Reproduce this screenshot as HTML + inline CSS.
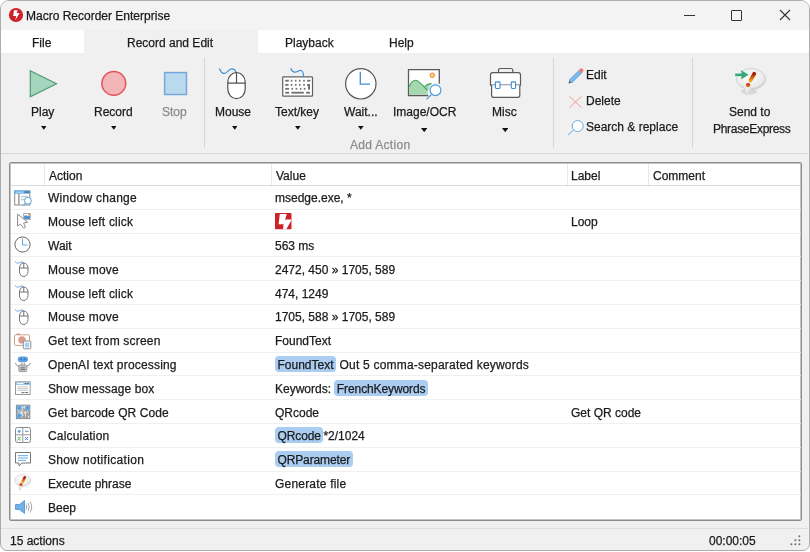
<!DOCTYPE html><html><head><meta charset="utf-8"><style>
html,body{margin:0;padding:0;width:810px;height:552px;overflow:hidden;background:#fff}
.r{position:absolute}
.t{position:absolute;font-family:'Liberation Sans', sans-serif;line-height:20px;white-space:pre;will-change:transform;-webkit-text-stroke:0.25px currentColor}
.p{background:#abcdf1;border-radius:4px;padding:2.3px 2.5px 0.2px 2.5px}
</style></head><body><div class="r" style="left:0;top:0;width:810px;height:552px;background:#ffffff"></div><div class="r" style="left:0;top:0;width:808px;height:549px;background:#f0f0f0;border:1px solid #adadad;border-radius:9px 9px 7px 7px;overflow:hidden"><div class="r" style="left:0;top:0;width:808px;height:29px;background:#f3f3f3"></div><div class="r" style="left:0;top:29px;width:808px;height:23px;background:#ffffff"></div><div class="r" style="left:83px;top:29px;width:174px;height:23px;background:#f0f0f0"></div></div><svg style="position:absolute;left:8px;top:7px;" width="16" height="16" viewBox="0 0 16 16"><circle cx="8" cy="8" r="7.1" fill="#cc2229"/><path d="M6 3.2 L9.8 3.2 L8.5 6 L11.6 6 L7.3 13.2 L8.2 8.9 L5.2 8.9 Z" fill="#fff"/></svg><div class="t" style="left:26px;top:6px;font-size:12px;color:#1b1b1b;">Macro Recorder Enterprise</div><div class="r" style="left:684px;top:14.5px;width:11px;height:1px;background:#333;"></div><div class="r" style="left:731px;top:10px;width:9px;height:9px;border:1px solid #333;border-radius:1px"></div><svg style="position:absolute;left:779px;top:9px;" width="12" height="12" viewBox="0 0 12 12"><path d="M1 1 L11 11 M11 1 L1 11" stroke="#333" stroke-width="1.1"/></svg><div class="t" style="left:32px;top:33px;font-size:12px;color:#1b1b1b;">File</div><div class="t" style="left:127px;top:33px;font-size:12px;color:#1b1b1b;">Record and Edit</div><div class="t" style="left:285px;top:33px;font-size:12px;color:#1b1b1b;">Playback</div><div class="t" style="left:389px;top:33px;font-size:12px;color:#1b1b1b;">Help</div><div class="r" style="left:1px;top:153px;width:807px;height:1px;background:#d9d9d9;"></div><div class="r" style="left:204px;top:58px;width:1px;height:90px;background:#d6d6d6;"></div><div class="r" style="left:553px;top:58px;width:1px;height:90px;background:#d6d6d6;"></div><div class="r" style="left:692px;top:58px;width:1px;height:90px;background:#d6d6d6;"></div><svg style="position:absolute;left:28px;top:68px;" width="32" height="32" viewBox="0 0 32 32"><path d="M2.3 2.7 L28.5 15.7 L2.3 28.7 Z" fill="#a6d5bd" stroke="#4f9a73" stroke-width="1.2" stroke-linejoin="miter"/></svg><svg style="position:absolute;left:99px;top:69px;" width="30" height="30" viewBox="0 0 30 30"><circle cx="14.8" cy="14.4" r="11.9" fill="#f2b6b9" stroke="#e6505a" stroke-width="1.5"/></svg><svg style="position:absolute;left:162px;top:70px;" width="28" height="28" viewBox="0 0 28 28"><rect x="2.6" y="2.6" width="21.9" height="21.9" fill="#b9d9ef" stroke="#76a9d9" stroke-width="1.5"/></svg><svg style="position:absolute;left:216px;top:64px;" width="34" height="38" viewBox="0 0 34 38"><path d="M3.4 4.5 C5 8.5 7 10 9 9.3 C11.5 8.5 13 5 15.5 4.9 C17.5 4.8 19.5 6 20.1 8.5" fill="none" stroke="#3b8ed8" stroke-width="1.2"/><rect x="11.8" y="8.5" width="17.4" height="26.1" rx="8.7" ry="9.5" fill="#fff" stroke="#505050" stroke-width="1.2"/><path d="M20.5 8.5 V19.2 M11.8 19.2 H29.2" stroke="#505050" stroke-width="1.2"/></svg><svg style="position:absolute;left:280px;top:64px;" width="36" height="36" viewBox="0 0 36 36"><rect x="2.7" y="12.9" width="29.8" height="19.3" rx="0.8" fill="#fff" stroke="#606060" stroke-width="1.2"/><path d="M10.7 4.2 C12 7.5 14 8.5 16 8 C18 7.5 19 6 21 6.5 C23 7 23.5 9 23.5 12.4" fill="none" stroke="#3b8ed8" stroke-width="1.2"/><rect x="5.2" y="15.8" width="3.6" height="1.8" fill="#707070"/><rect x="10.7" y="15.8" width="1.7" height="1.8" fill="#707070"/><rect x="14.9" y="15.8" width="1.6" height="1.8" fill="#707070"/><rect x="18.9" y="15.8" width="1.6" height="1.8" fill="#707070"/><rect x="23.2" y="15.8" width="1.6" height="1.8" fill="#707070"/><rect x="27.1" y="15.8" width="3.3" height="1.8" fill="#707070"/><rect x="5.2" y="20" width="3.3" height="1.8" fill="#707070"/><rect x="10.7" y="20" width="1.7" height="1.8" fill="#707070"/><rect x="14.9" y="20" width="1.6" height="1.8" fill="#707070"/><rect x="18.9" y="20" width="1.6" height="1.8" fill="#707070"/><rect x="23.2" y="20" width="1.6" height="1.8" fill="#707070"/><rect x="27.1" y="20" width="2.9" height="1.8" fill="#707070"/><rect x="5.2" y="23.9" width="3.9" height="1.8" fill="#707070"/><rect x="11.4" y="23.9" width="1.6" height="1.8" fill="#707070"/><rect x="15.6" y="23.9" width="1.6" height="1.8" fill="#707070"/><rect x="19.9" y="23.9" width="1.6" height="1.8" fill="#707070"/><rect x="23.8" y="23.9" width="1.6" height="1.8" fill="#707070"/><rect x="5.2" y="27.8" width="3.9" height="1.8" fill="#707070"/><rect x="11.4" y="27.8" width="12.4" height="1.8" fill="#707070"/><rect x="26.1" y="27.8" width="3.9" height="1.8" fill="#707070"/><rect x="28.1" y="20" width="1.9" height="5.7" fill="#707070"/></svg><svg style="position:absolute;left:344px;top:67px;" width="34" height="34" viewBox="0 0 34 34"><circle cx="16.8" cy="16.8" r="15.2" fill="#fff" stroke="#555" stroke-width="1.2"/><path d="M16.3 4.8 V17.2 H26" fill="none" stroke="#3b8ed8" stroke-width="1.3"/></svg><svg style="position:absolute;left:406px;top:67px;" width="36" height="36" viewBox="0 0 36 36"><rect x="2.5" y="2.6" width="30.8" height="25.9" fill="#fff"/><path d="M22.3 28.5 H2.5 V2.6 H33.3 V16.7" fill="none" stroke="#5a5a5a" stroke-width="1.3"/><path d="M3.2 19.4 C5 15.5 7.5 13.3 9.7 13.3 C12.5 13.3 16 17.5 21.5 23.5 L22 27.8 H3.2 Z" fill="#a6d8b0"/><path d="M18.8 19.4 C21 17.5 23.5 16.5 25.7 16.7 L25 24 L21.5 23.5 Z" fill="#a6d8b0"/><path d="M3.2 19.4 C5 15.5 7.5 13.3 9.7 13.3 C12.5 13.3 16 17.5 21.5 23.5 M18.8 19.4 C21 17.5 23.5 16.5 25.7 16.7" fill="none" stroke="#3aa05a" stroke-width="1.1"/><circle cx="26.3" cy="8.3" r="2.3" fill="#f8d078" stroke="#f08a3a" stroke-width="1"/><circle cx="29.5" cy="23.2" r="7.2" fill="#f0f0f0"/><circle cx="29.5" cy="23.2" r="5.4" fill="#fff" stroke="#4a9ee0" stroke-width="1.2"/><path d="M25.3 27.7 L20.4 32.4" stroke="#4a9ee0" stroke-width="1.3"/></svg><svg style="position:absolute;left:488px;top:66px;" width="34" height="34" viewBox="0 0 34 34"><path d="M10.5 6.7 V4.5 Q10.5 2.5 12.5 2.5 H22.8 Q24.8 2.5 24.8 4.5 V6.7" fill="none" stroke="#5a5a5a" stroke-width="1.2"/><path d="M2.5 19.2 V9 Q2.5 6.7 4.8 6.7 H30.2 Q32.5 6.7 32.5 9 V19.2 Z" fill="#fff" stroke="#5a5a5a" stroke-width="1.2"/><path d="M3.6 19.2 V29.2 Q3.6 31.4 5.8 31.4 H29.6 Q31.8 31.4 31.8 29.2 V19.2" fill="#fff" stroke="#5a5a5a" stroke-width="1.2"/><rect x="7.4" y="15.9" width="4.6" height="6.6" rx="0.9" fill="#fff" stroke="#3b8ed8" stroke-width="1.1"/><rect x="23.3" y="15.9" width="4.3" height="6.6" rx="0.9" fill="#fff" stroke="#3b8ed8" stroke-width="1.1"/></svg><div class="t" style="left:31px;top:102px;font-size:12px;color:#1b1b1b;">Play</div><div class="t" style="left:94px;top:102px;font-size:12px;color:#1b1b1b;">Record</div><div class="t" style="left:162px;top:102px;font-size:12px;color:#8c8c8c;">Stop</div><div class="t" style="left:215px;top:102px;font-size:12px;color:#1b1b1b;">Mouse</div><div class="t" style="left:275px;top:102px;font-size:12px;color:#1b1b1b;">Text/key</div><div class="t" style="left:344px;top:102px;font-size:12px;color:#1b1b1b;">Wait...</div><div class="t" style="left:393px;top:102px;font-size:12px;color:#1b1b1b;">Image/OCR</div><div class="t" style="left:492px;top:102px;font-size:12px;color:#1b1b1b;">Misc</div><svg style="position:absolute;left:40.5px;top:126px;" width="5.6" height="3.8" viewBox="0 0 5.6 3.8"><path d="M0 0 H5.6 L2.8 3.8 Z" fill="#111"/></svg><svg style="position:absolute;left:110.8px;top:126px;" width="5.6" height="3.8" viewBox="0 0 5.6 3.8"><path d="M0 0 H5.6 L2.8 3.8 Z" fill="#111"/></svg><svg style="position:absolute;left:231.6px;top:126px;" width="5.6" height="3.8" viewBox="0 0 5.6 3.8"><path d="M0 0 H5.6 L2.8 3.8 Z" fill="#111"/></svg><svg style="position:absolute;left:295.0px;top:126px;" width="5.6" height="3.8" viewBox="0 0 5.6 3.8"><path d="M0 0 H5.6 L2.8 3.8 Z" fill="#111"/></svg><svg style="position:absolute;left:358.0px;top:126px;" width="5.6" height="3.8" viewBox="0 0 5.6 3.8"><path d="M0 0 H5.6 L2.8 3.8 Z" fill="#111"/></svg><svg style="position:absolute;left:421.0px;top:127.6px;" width="6.4" height="4.2" viewBox="0 0 6.4 4.2"><path d="M0 0 H6.4 L3.2 4.2 Z" fill="#111"/></svg><svg style="position:absolute;left:501.8px;top:127.8px;" width="6.4" height="4.2" viewBox="0 0 6.4 4.2"><path d="M0 0 H6.4 L3.2 4.2 Z" fill="#111"/></svg><div class="t" style="left:350px;top:135px;font-size:12px;color:#8c8c8c;letter-spacing:0.3px">Add Action</div><svg style="position:absolute;left:564px;top:64px;" width="24" height="24" viewBox="0 0 24 24"><g transform="translate(11.6 12.4) rotate(-45)"><path d="M-10 0 L-7 -1.9 L-7 1.9 Z" fill="#555"/><path d="M-7.6 -1.5 L-7 -1.9 V1.9 L-7.6 1.5 Z" fill="#ddd"/><rect x="-7" y="-1.9" width="13.5" height="3.8" fill="#7cb9ee" stroke="#4a8fd6" stroke-width="0.6"/><path d="M6.5 -2.1 H8.2 A2.1 2.1 0 0 1 8.2 2.1 H6.5 Z" fill="#f07a7a"/></g></svg><svg style="position:absolute;left:568px;top:95px;" width="15" height="14" viewBox="0 0 15 14"><path d="M1.5 1.5 L13.5 12.5 M13.5 1.5 L1.5 12.5" stroke="#f09a9a" stroke-width="1"/></svg><svg style="position:absolute;left:566px;top:118px;" width="20" height="20" viewBox="0 0 20 20"><circle cx="11.7" cy="8" r="5.5" fill="#fff" stroke="#6aaee6" stroke-width="1"/><path d="M7.6 12 L2 17" stroke="#6aaee6" stroke-width="1"/></svg><div class="t" style="left:586px;top:65px;font-size:12px;color:#1b1b1b;">Edit</div><div class="t" style="left:586px;top:91px;font-size:12px;color:#1b1b1b;">Delete</div><div class="t" style="left:586px;top:117px;font-size:12px;color:#1b1b1b;">Search &amp; replace</div><svg style="position:absolute;left:734px;top:66px;" width="34" height="34" viewBox="0 0 34 34"><defs><radialGradient id="bub" cx="0.45" cy="0.4" r="0.65"><stop offset="0" stop-color="#ffffff"/><stop offset="0.75" stop-color="#eaeaea"/><stop offset="1" stop-color="#c4c4c4"/></radialGradient><linearGradient id="exc" x1="0" y1="0" x2="0" y2="1"><stop offset="0" stop-color="#a81808"/><stop offset="1" stop-color="#f0a010"/></linearGradient><linearGradient id="dot" x1="0" y1="0" x2="0" y2="1"><stop offset="0" stop-color="#b02008"/><stop offset="1" stop-color="#f09020"/></linearGradient></defs><ellipse cx="15" cy="25.5" rx="8" ry="3" fill="#d6d6d6" opacity="0.9"/><path d="M10 20 L12.3 29 L19 21.5 Z" fill="#e4e4e4" stroke="#cfcfcf" stroke-width="0.5"/><ellipse cx="17" cy="13" rx="14.6" ry="10.5" fill="url(#bub)" stroke="#c6c6c6" stroke-width="0.7"/><path d="M10 20.5 L12.3 27 L17 22 Z" fill="#ececec"/><path d="M20.3 7.8 L16.5 14.4" stroke="url(#exc)" stroke-width="3.8" stroke-linecap="round"/><circle cx="14.1" cy="19.1" r="2.2" fill="url(#dot)"/><path d="M0.7 7.1 H7.2 L6 2.9 L15.3 8.8 L6 14.6 L7.2 10.7 H0.7 Z" fill="#3aa87a" stroke="#fff" stroke-width="0.8" stroke-linejoin="round"/></svg><div class="t" style="left:729px;top:102px;font-size:12px;color:#1b1b1b;">Send to</div><div class="t" style="left:713px;top:119px;font-size:12px;color:#1b1b1b;letter-spacing:-0.3px">PhraseExpress</div><div class="r" style="left:9px;top:162px;width:793px;height:359px;background:#fff;border:1px solid #8e8e8e;box-shadow:inset 0 0 0 1px #c4c4c4;border-radius:2px;box-sizing:border-box"></div><div class="r" style="left:11px;top:185px;width:790px;height:1px;background:#d9d9d9;"></div><div class="r" style="left:44px;top:164px;width:1px;height:21px;background:#e8e8e8;"></div><div class="r" style="left:271px;top:164px;width:1px;height:21px;background:#e8e8e8;"></div><div class="r" style="left:567px;top:164px;width:1px;height:21px;background:#e8e8e8;"></div><div class="r" style="left:648px;top:164px;width:1px;height:21px;background:#e8e8e8;"></div><div class="t" style="left:48.7px;top:166px;font-size:12px;color:#1b1b1b;">Action</div><div class="t" style="left:276px;top:166px;font-size:12px;color:#1b1b1b;">Value</div><div class="t" style="left:571.3px;top:166px;font-size:12px;color:#1b1b1b;">Label</div><div class="t" style="left:653px;top:166px;font-size:12px;color:#1b1b1b;">Comment</div><div class="r" style="left:11px;top:208.8px;width:790px;height:1px;background:#f0f0f0;"></div><div class="r" style="left:11px;top:232.6px;width:790px;height:1px;background:#f0f0f0;"></div><div class="r" style="left:11px;top:256.4px;width:790px;height:1px;background:#f0f0f0;"></div><div class="r" style="left:11px;top:280.2px;width:790px;height:1px;background:#f0f0f0;"></div><div class="r" style="left:11px;top:304.0px;width:790px;height:1px;background:#f0f0f0;"></div><div class="r" style="left:11px;top:327.8px;width:790px;height:1px;background:#f0f0f0;"></div><div class="r" style="left:11px;top:351.6px;width:790px;height:1px;background:#f0f0f0;"></div><div class="r" style="left:11px;top:375.4px;width:790px;height:1px;background:#f0f0f0;"></div><div class="r" style="left:11px;top:399.2px;width:790px;height:1px;background:#f0f0f0;"></div><div class="r" style="left:11px;top:423.0px;width:790px;height:1px;background:#f0f0f0;"></div><div class="r" style="left:11px;top:446.8px;width:790px;height:1px;background:#f0f0f0;"></div><div class="r" style="left:11px;top:470.6px;width:790px;height:1px;background:#f0f0f0;"></div><div class="r" style="left:11px;top:494.4px;width:790px;height:1px;background:#f0f0f0;"></div><svg style="position:absolute;left:14px;top:189.5px;" width="18" height="17" viewBox="0 0 18 17"><rect x="0.7" y="1" width="15.1" height="14" fill="#fff" stroke="#8a8a8a" stroke-width="1"/><rect x="0.2" y="0.5" width="16.1" height="3.2" fill="#5aa6e6"/><rect x="1.5" y="1.6" width="8" height="1" fill="#cfe6fa"/><rect x="10.5" y="1.5" width="1.2" height="1.2" fill="#555"/><rect x="12.3" y="1.5" width="1.2" height="1.2" fill="#555"/><rect x="14.1" y="1.5" width="1.2" height="1.2" fill="#555"/><path d="M4.9 3.7 V14.6" stroke="#777" stroke-width="1.1"/><rect x="6.8" y="5.8" width="7.2" height="1.5" fill="#c8c8c8"/><rect x="6.8" y="8.8" width="7.2" height="1.5" fill="#c8c8c8"/><circle cx="13.9" cy="10.8" r="3.3" fill="#fff" stroke="#6ab0e8" stroke-width="1.1"/><path d="M11.6 13.2 L9.3 15.8" stroke="#6ab0e8" stroke-width="1.2"/></svg><div class="t" style="left:48px;top:188px;font-size:12px;color:#1b1b1b;letter-spacing:0.28px">Window change</div><div class="t" style="left:275px;top:188px;font-size:12px;color:#1b1b1b;">msedge.exe, *</div><svg style="position:absolute;left:14px;top:212px;" width="18" height="17" viewBox="0 0 18 17"><path d="M3.6 2 L3.6 13.9 L6.6 12.3 L9.8 16.3 L11.5 15.1 L9.6 11.1 L13.7 10.2 Z" fill="#fff" stroke="#8a8a8a" stroke-width="1" stroke-linejoin="round"/><rect x="9.7" y="1.5" width="6.6" height="5.8" fill="#fff" stroke="#999" stroke-width="0.8"/><path d="M10.1 4 L12 3 L13.5 4.2 L15 3.4 L15.9 4 V6.9 H10.1 Z" fill="#4a90d9"/><rect x="14.2" y="1.9" width="1.7" height="1.7" fill="#f09040"/></svg><div class="t" style="left:48px;top:212px;font-size:12px;color:#1b1b1b;letter-spacing:0.2px">Mouse left click</div><svg style="position:absolute;left:275px;top:213px;" width="17" height="17" viewBox="0 0 17 17"><rect x="0" y="0" width="16.5" height="16.2" rx="0.8" fill="#cc2229"/><path d="M4.8 1 L11.8 1 L10.1 6.6 L16.5 6.6 L16.5 7 L11.3 16.2 L8 16.2 L8.6 11.3 L3.6 11.3 Z" fill="#fff"/></svg><div class="t" style="left:571px;top:212px;font-size:12px;color:#1b1b1b;">Loop</div><svg style="position:absolute;left:14px;top:236px;" width="17" height="17" viewBox="0 0 17 17"><circle cx="8.5" cy="8.5" r="7.6" fill="#fff" stroke="#666" stroke-width="1"/><path d="M8.5 2.5 V9 H13.5" fill="none" stroke="#5aa6e6" stroke-width="1"/></svg><div class="t" style="left:48px;top:236px;font-size:12px;color:#1b1b1b;">Wait</div><div class="t" style="left:275px;top:236px;font-size:12px;color:#1b1b1b;">563 ms</div><svg style="position:absolute;left:14px;top:260.0px;" width="16" height="18" viewBox="0 0 16 18"><path d="M1 1.5 C3 3.5 4.5 3.5 6 2.5 C7.5 1.5 9 1.8 10 3.5" fill="none" stroke="#5aa6e6" stroke-width="0.9"/><rect x="5.5" y="3" width="8.5" height="13.5" rx="4.25" ry="4.8" fill="#fff" stroke="#666" stroke-width="0.9"/><path d="M9.75 3 V8 M5.5 8 H14" stroke="#666" stroke-width="0.9"/></svg><div class="t" style="left:48px;top:260px;font-size:12px;color:#1b1b1b;letter-spacing:0.22px">Mouse move</div><div class="t" style="left:275px;top:260px;font-size:12px;color:#1b1b1b;">2472, 450 » 1705, 589</div><svg style="position:absolute;left:14px;top:283.8px;" width="16" height="18" viewBox="0 0 16 18"><path d="M1 1.5 C3 3.5 4.5 3.5 6 2.5 C7.5 1.5 9 1.8 10 3.5" fill="none" stroke="#5aa6e6" stroke-width="0.9"/><rect x="5.5" y="3" width="8.5" height="13.5" rx="4.25" ry="4.8" fill="#fff" stroke="#666" stroke-width="0.9"/><path d="M9.75 3 V8 M5.5 8 H14" stroke="#666" stroke-width="0.9"/></svg><div class="t" style="left:48px;top:284px;font-size:12px;color:#1b1b1b;letter-spacing:0.2px">Mouse left click</div><div class="t" style="left:275px;top:284px;font-size:12px;color:#1b1b1b;">474, 1249</div><svg style="position:absolute;left:14px;top:307.6px;" width="16" height="18" viewBox="0 0 16 18"><path d="M1 1.5 C3 3.5 4.5 3.5 6 2.5 C7.5 1.5 9 1.8 10 3.5" fill="none" stroke="#5aa6e6" stroke-width="0.9"/><rect x="5.5" y="3" width="8.5" height="13.5" rx="4.25" ry="4.8" fill="#fff" stroke="#666" stroke-width="0.9"/><path d="M9.75 3 V8 M5.5 8 H14" stroke="#666" stroke-width="0.9"/></svg><div class="t" style="left:48px;top:307px;font-size:12px;color:#1b1b1b;letter-spacing:0.22px">Mouse move</div><div class="t" style="left:275px;top:307px;font-size:12px;color:#1b1b1b;">1705, 588 » 1705, 589</div><svg style="position:absolute;left:14px;top:332.5px;" width="18" height="17" viewBox="0 0 18 17"><rect x="0.5" y="1.8" width="15" height="10.6" rx="0.8" fill="#fff" stroke="#c99585" stroke-width="0.9"/><rect x="2.5" y="0.6" width="3.5" height="1.4" rx="0.5" fill="#c99585"/><circle cx="8" cy="6.9" r="3.7" fill="#dc9a88"/><rect x="9.3" y="8" width="7.5" height="7.8" rx="1" fill="#fff" stroke="#8a8a8a" stroke-width="1"/><rect x="10.8" y="9.5" width="4.5" height="4.8" fill="#a8d0f0"/></svg><div class="t" style="left:48px;top:331px;font-size:12px;color:#1b1b1b;letter-spacing:0.19px">Get text from screen</div><div class="t" style="left:275px;top:331px;font-size:12px;color:#1b1b1b;">FoundText</div><svg style="position:absolute;left:14px;top:355.5px;" width="18" height="17" viewBox="0 0 18 17"><rect x="3.8" y="0.5" width="10.1" height="5.6" rx="2.8" fill="#5aa0e0"/><rect x="6" y="2.5" width="2" height="1.4" fill="#3a78c0"/><rect x="9.8" y="2.5" width="2" height="1.4" fill="#3a78c0"/><rect x="6.8" y="6.3" width="0.8" height="2.6" fill="#999"/><rect x="8.5" y="6.3" width="0.8" height="2.6" fill="#999"/><rect x="10.2" y="6.3" width="0.8" height="2.6" fill="#999"/><path d="M1.2 7 L3 9.5 L5 10 M16.5 7 L14.7 9.5 L12.7 10" fill="none" stroke="#888" stroke-width="0.9"/><rect x="4.8" y="9.2" width="8" height="6.4" rx="1" fill="#c8c8c8" stroke="#8a8a8a" stroke-width="0.8"/><rect x="6.5" y="11.4" width="4.6" height="0.9" fill="#666"/><rect x="6.5" y="13.1" width="4.6" height="0.9" fill="#666"/></svg><div class="t" style="left:48px;top:355px;font-size:12px;color:#1b1b1b;letter-spacing:0.18px">OpenAI text processing</div><div class="t" style="left:275px;top:355px;font-size:12px;color:#1b1b1b;"><span class="p">FoundText</span><span style="letter-spacing:0.2px"> Out 5 comma-separated keywords</span></div><svg style="position:absolute;left:14px;top:380.5px;" width="17" height="15" viewBox="0 0 17 15"><rect x="1.5" y="0.8" width="14.7" height="12.7" fill="#fff" stroke="#9a9a9a" stroke-width="1"/><rect x="2" y="1.3" width="13.7" height="2.6" fill="#8cc0ec"/><rect x="3" y="2.1" width="6.5" height="1" fill="#fff"/><rect x="11" y="2.1" width="1" height="1" fill="#556"/><rect x="12.5" y="2.1" width="1" height="1" fill="#556"/><rect x="14" y="2.1" width="1" height="1" fill="#556"/><rect x="3.5" y="5.2" width="10.5" height="1.2" fill="#d0d0d0"/><rect x="3.5" y="7" width="10.5" height="1.2" fill="#d0d0d0"/><rect x="3.5" y="8.8" width="10.5" height="1.2" fill="#d0d0d0"/><rect x="7.5" y="11" width="3" height="1.1" fill="#777"/><rect x="11.2" y="11" width="3" height="1.1" fill="#777"/></svg><div class="t" style="left:48px;top:379px;font-size:12px;color:#1b1b1b;letter-spacing:0.1px">Show message box</div><div class="t" style="left:275px;top:379px;font-size:12px;color:#1b1b1b;">Keywords: <span class="p" style="letter-spacing:-0.1px">FrenchKeywords</span></div><svg style="position:absolute;left:14.5px;top:403.5px;" width="16" height="16" viewBox="0 0 16 16"><rect x="1.4" y="1.2" width="13.4" height="13.4" fill="#e6e6e6" stroke="#8a8a8a" stroke-width="1"/><rect x="1.9" y="1.7" width="1" height="1" fill="#8a8a8a"/><rect x="1.9" y="2.7" width="1" height="1" fill="#8a8a8a"/><rect x="1.9" y="4.7" width="1" height="1" fill="#8a8a8a"/><rect x="1.9" y="6.7" width="1" height="1" fill="#8a8a8a"/><rect x="1.9" y="7.7" width="1" height="1" fill="#8a8a8a"/><rect x="1.9" y="9.7" width="1" height="1" fill="#8a8a8a"/><rect x="1.9" y="10.7" width="1" height="1" fill="#8a8a8a"/><rect x="1.9" y="11.7" width="1" height="1" fill="#8a8a8a"/><rect x="1.9" y="12.7" width="1" height="1" fill="#8a8a8a"/><rect x="1.9" y="13.7" width="1" height="1" fill="#8a8a8a"/><rect x="2.9" y="2.7" width="1" height="1" fill="#8a8a8a"/><rect x="2.9" y="3.7" width="1" height="1" fill="#8a8a8a"/><rect x="2.9" y="7.7" width="1" height="1" fill="#8a8a8a"/><rect x="2.9" y="9.7" width="1" height="1" fill="#8a8a8a"/><rect x="2.9" y="11.7" width="1" height="1" fill="#8a8a8a"/><rect x="2.9" y="12.7" width="1" height="1" fill="#8a8a8a"/><rect x="2.9" y="13.7" width="1" height="1" fill="#8a8a8a"/><rect x="3.9" y="1.7" width="1" height="1" fill="#8a8a8a"/><rect x="3.9" y="3.7" width="1" height="1" fill="#8a8a8a"/><rect x="3.9" y="6.7" width="1" height="1" fill="#8a8a8a"/><rect x="3.9" y="8.7" width="1" height="1" fill="#8a8a8a"/><rect x="3.9" y="9.7" width="1" height="1" fill="#8a8a8a"/><rect x="3.9" y="10.7" width="1" height="1" fill="#8a8a8a"/><rect x="3.9" y="12.7" width="1" height="1" fill="#8a8a8a"/><rect x="3.9" y="13.7" width="1" height="1" fill="#8a8a8a"/><rect x="4.9" y="3.7" width="1" height="1" fill="#8a8a8a"/><rect x="4.9" y="6.7" width="1" height="1" fill="#8a8a8a"/><rect x="4.9" y="11.7" width="1" height="1" fill="#8a8a8a"/><rect x="4.9" y="13.7" width="1" height="1" fill="#8a8a8a"/><rect x="5.9" y="1.7" width="1" height="1" fill="#8a8a8a"/><rect x="5.9" y="3.7" width="1" height="1" fill="#8a8a8a"/><rect x="5.9" y="5.7" width="1" height="1" fill="#8a8a8a"/><rect x="5.9" y="10.7" width="1" height="1" fill="#8a8a8a"/><rect x="6.9" y="6.7" width="1" height="1" fill="#8a8a8a"/><rect x="6.9" y="11.7" width="1" height="1" fill="#8a8a8a"/><rect x="6.9" y="12.7" width="1" height="1" fill="#8a8a8a"/><rect x="7.9" y="1.7" width="1" height="1" fill="#8a8a8a"/><rect x="7.9" y="3.7" width="1" height="1" fill="#8a8a8a"/><rect x="7.9" y="4.7" width="1" height="1" fill="#8a8a8a"/><rect x="7.9" y="5.7" width="1" height="1" fill="#8a8a8a"/><rect x="7.9" y="7.7" width="1" height="1" fill="#8a8a8a"/><rect x="7.9" y="8.7" width="1" height="1" fill="#8a8a8a"/><rect x="7.9" y="9.7" width="1" height="1" fill="#8a8a8a"/><rect x="7.9" y="11.7" width="1" height="1" fill="#8a8a8a"/><rect x="7.9" y="12.7" width="1" height="1" fill="#8a8a8a"/><rect x="8.9" y="4.7" width="1" height="1" fill="#8a8a8a"/><rect x="8.9" y="5.7" width="1" height="1" fill="#8a8a8a"/><rect x="8.9" y="6.7" width="1" height="1" fill="#8a8a8a"/><rect x="8.9" y="9.7" width="1" height="1" fill="#8a8a8a"/><rect x="8.9" y="10.7" width="1" height="1" fill="#8a8a8a"/><rect x="8.9" y="11.7" width="1" height="1" fill="#8a8a8a"/><rect x="8.9" y="12.7" width="1" height="1" fill="#8a8a8a"/><rect x="9.9" y="2.7" width="1" height="1" fill="#8a8a8a"/><rect x="9.9" y="3.7" width="1" height="1" fill="#8a8a8a"/><rect x="9.9" y="4.7" width="1" height="1" fill="#8a8a8a"/><rect x="9.9" y="5.7" width="1" height="1" fill="#8a8a8a"/><rect x="9.9" y="12.7" width="1" height="1" fill="#8a8a8a"/><rect x="10.9" y="4.7" width="1" height="1" fill="#8a8a8a"/><rect x="10.9" y="5.7" width="1" height="1" fill="#8a8a8a"/><rect x="10.9" y="6.7" width="1" height="1" fill="#8a8a8a"/><rect x="10.9" y="8.7" width="1" height="1" fill="#8a8a8a"/><rect x="10.9" y="9.7" width="1" height="1" fill="#8a8a8a"/><rect x="10.9" y="10.7" width="1" height="1" fill="#8a8a8a"/><rect x="10.9" y="11.7" width="1" height="1" fill="#8a8a8a"/><rect x="10.9" y="12.7" width="1" height="1" fill="#8a8a8a"/><rect x="10.9" y="13.7" width="1" height="1" fill="#8a8a8a"/><rect x="11.9" y="1.7" width="1" height="1" fill="#8a8a8a"/><rect x="11.9" y="2.7" width="1" height="1" fill="#8a8a8a"/><rect x="11.9" y="3.7" width="1" height="1" fill="#8a8a8a"/><rect x="11.9" y="4.7" width="1" height="1" fill="#8a8a8a"/><rect x="11.9" y="5.7" width="1" height="1" fill="#8a8a8a"/><rect x="11.9" y="8.7" width="1" height="1" fill="#8a8a8a"/><rect x="11.9" y="9.7" width="1" height="1" fill="#8a8a8a"/><rect x="11.9" y="10.7" width="1" height="1" fill="#8a8a8a"/><rect x="11.9" y="11.7" width="1" height="1" fill="#8a8a8a"/><rect x="11.9" y="12.7" width="1" height="1" fill="#8a8a8a"/><rect x="12.9" y="4.7" width="1" height="1" fill="#8a8a8a"/><rect x="12.9" y="5.7" width="1" height="1" fill="#8a8a8a"/><rect x="12.9" y="6.7" width="1" height="1" fill="#8a8a8a"/><rect x="12.9" y="7.7" width="1" height="1" fill="#8a8a8a"/><rect x="12.9" y="9.7" width="1" height="1" fill="#8a8a8a"/><rect x="12.9" y="10.7" width="1" height="1" fill="#8a8a8a"/><rect x="12.9" y="13.7" width="1" height="1" fill="#8a8a8a"/><rect x="13.9" y="2.7" width="1" height="1" fill="#8a8a8a"/><rect x="13.9" y="7.7" width="1" height="1" fill="#8a8a8a"/><rect x="13.9" y="8.7" width="1" height="1" fill="#8a8a8a"/><rect x="13.9" y="9.7" width="1" height="1" fill="#8a8a8a"/><rect x="13.9" y="13.7" width="1" height="1" fill="#8a8a8a"/><rect x="1.9" y="1.7" width="4.4" height="4.6" fill="#6aaee8"/><rect x="3.5" y="3.4" width="1.2" height="1.2" fill="#2a70c0"/><rect x="10.3" y="1.7" width="4.4" height="4.6" fill="#6aaee8"/><rect x="11.9" y="3.4" width="1.2" height="1.2" fill="#2a70c0"/><rect x="1.9" y="9.6" width="4.4" height="4.6" fill="#6aaee8"/><rect x="3.5" y="11.299999999999999" width="1.2" height="1.2" fill="#2a70c0"/></svg><div class="t" style="left:48px;top:403px;font-size:12px;color:#1b1b1b;letter-spacing:0.07px">Get barcode QR Code</div><div class="t" style="left:275px;top:403px;font-size:12px;color:#1b1b1b;">QRcode</div><div class="t" style="left:571px;top:403px;font-size:12px;color:#1b1b1b;">Get QR code</div><svg style="position:absolute;left:14.6px;top:427px;" width="16" height="16" viewBox="0 0 16 16"><rect x="0.5" y="0.5" width="15" height="15" rx="2" fill="#fff" stroke="#888" stroke-width="1"/><path d="M7.8 0.5 V15.5 M0.5 7.8 H15.5" stroke="#999" stroke-width="1"/><path d="M2.5 4.3 H5.7 M4.1 2.7 V5.9 M10 4.3 H13.5" stroke="#4a90d9" stroke-width="1.1"/><path d="M2.5 13.5 L5.5 10 M2.6 10.2 h1 M4.6 13 h1" stroke="#50b060" stroke-width="1.1"/><path d="M10.2 10 L13 13 M13 10 L10.2 13" stroke="#4a90d9" stroke-width="1"/></svg><div class="t" style="left:48px;top:426px;font-size:12px;color:#1b1b1b;letter-spacing:0.18px">Calculation</div><div class="t" style="left:275px;top:426px;font-size:12px;color:#1b1b1b;"><span class="p" style="letter-spacing:-0.1px">QRcode</span>*2/1024</div><svg style="position:absolute;left:15px;top:451.5px;" width="16" height="15" viewBox="0 0 16 15"><path d="M0.5 0.5 H15.5 V11 H7 L4 14 V11 H0.5 Z" fill="#fff" stroke="#777" stroke-width="1" stroke-linejoin="round"/><rect x="3" y="3" width="10" height="1.2" fill="#80b8e8"/><rect x="3" y="5.4" width="10" height="1.2" fill="#80b8e8"/><rect x="3" y="7.8" width="8" height="1.2" fill="#80b8e8"/></svg><div class="t" style="left:48px;top:450px;font-size:12px;color:#1b1b1b;letter-spacing:0.32px">Show notification</div><div class="t" style="left:275px;top:450px;font-size:12px;color:#1b1b1b;"><span class="p" style="letter-spacing:-0.13px">QRParameter</span></div><svg style="position:absolute;left:14px;top:474px;" width="17" height="17" viewBox="0 0 17 17"><defs><radialGradient id="bub2" cx="0.45" cy="0.4" r="0.65"><stop offset="0" stop-color="#ffffff"/><stop offset="0.75" stop-color="#ebebeb"/><stop offset="1" stop-color="#c8c8c8"/></radialGradient><linearGradient id="exc2" x1="0" y1="0" x2="0" y2="1"><stop offset="0" stop-color="#a81808"/><stop offset="1" stop-color="#f0a010"/></linearGradient></defs><path d="M4.5 11 L5.8 16.5 L9 12 Z" fill="#e0e0e0" stroke="#cfcfcf" stroke-width="0.5"/><ellipse cx="8.65" cy="6.35" rx="8" ry="6.1" fill="url(#bub2)" stroke="#d0d0d0" stroke-width="0.5"/><path d="M5 10.8 L5.8 15 L8.3 12 Z" fill="#eeeeee"/><path d="M10.8 3.4 L8.6 7.8" stroke="url(#exc2)" stroke-width="2.7" stroke-linecap="round"/><circle cx="7" cy="10.5" r="1.6" fill="#d04a10"/></svg><div class="t" style="left:48px;top:474px;font-size:12px;color:#1b1b1b;">Execute phrase</div><div class="t" style="left:275px;top:474px;font-size:12px;color:#1b1b1b;letter-spacing:0.2px">Generate file</div><svg style="position:absolute;left:14.5px;top:499.5px;" width="19" height="14" viewBox="0 0 19 14"><path d="M0.5 4.5 H4.5 L9.5 0.5 V13.5 L4.5 9.5 H0.5 Z" fill="#6fb2ea" stroke="#4a90d9" stroke-width="0.8"/><path d="M11 4.5 Q12.5 7 11 9.5 M13 3 Q15.5 7 13 11 M15 1.5 Q18.5 7 15 12.5" fill="none" stroke="#999" stroke-width="0.9"/></svg><div class="t" style="left:48px;top:498px;font-size:12px;color:#1b1b1b;">Beep</div><div class="r" style="left:1px;top:528px;width:807px;height:1px;background:#dedede;"></div><div class="t" style="left:10px;top:531px;font-size:12px;color:#1b1b1b;">15 actions</div><div class="t" style="left:709px;top:531px;font-size:12px;color:#1b1b1b;">00:00:05</div><svg style="position:absolute;left:790px;top:535px;" width="11" height="11" viewBox="0 0 11 11"><circle cx="9.4" cy="1.3" r="1" fill="#707070"/><circle cx="9.4" cy="5.3" r="1" fill="#707070"/><circle cx="5.4" cy="5.3" r="1" fill="#707070"/><circle cx="9.4" cy="9.3" r="1" fill="#707070"/><circle cx="5.4" cy="9.3" r="1" fill="#707070"/><circle cx="1.4" cy="9.3" r="1" fill="#707070"/></svg></body></html>
